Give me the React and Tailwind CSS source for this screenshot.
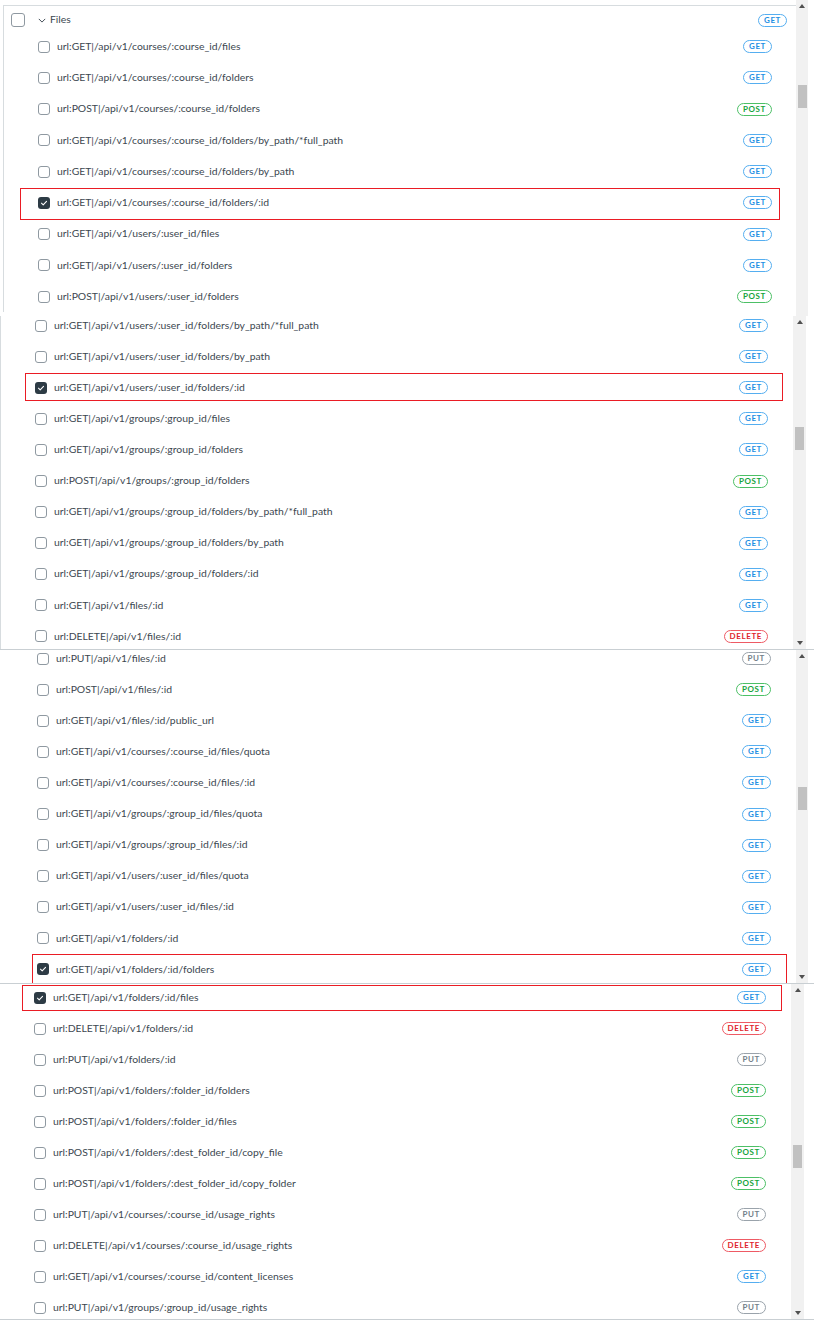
import React from "react";

const BADGE = {
  GET: "text-[#1f8fe3] border-[#55aef0]",
  POST: "text-[#16a33c] border-[#4cc066]",
  DELETE: "text-[#e01e2e] border-[#ee5a64]",
  PUT: "text-[#737f89] border-[#9aa3ab]",
};

const PANELS = [
  {
    wrap: "h-[316px]",
    list: "mt-[5px] ml-[3px] border-t border-l border-[#d7dcdf]",
    rows: "pl-[34px] pr-[24px]",
    rowH: "h-[31.25px]",
    header: true,
    bar: "w-[12px] mr-[6px]",
    thumb: "mt-[73px]",
    down: false,
    box: "-left-[18px] -right-[8px] top-[1px] -bottom-[1px]",
    items: [
      ["GET", "/api/v1/courses/:course_id/files"],
      ["GET", "/api/v1/courses/:course_id/folders"],
      ["POST", "/api/v1/courses/:course_id/folders"],
      ["GET", "/api/v1/courses/:course_id/folders/by_path/*full_path"],
      ["GET", "/api/v1/courses/:course_id/folders/by_path"],
      ["GET", "/api/v1/courses/:course_id/folders/:id", true],
      ["GET", "/api/v1/users/:user_id/files"],
      ["GET", "/api/v1/users/:user_id/folders"],
      ["POST", "/api/v1/users/:user_id/folders"],
    ],
  },
  {
    wrap: "h-[333px]",
    list: "ml-0 border-l border-[#d7dcdf] -mt-[6px]",
    rows: "pl-[34px] pr-[25px]",
    rowH: "h-[31.1px]",
    bar: "w-[13px] mr-[8px]",
    thumb: "mt-[99px]",
    down: true,
    box: "-left-[10px] -right-[15px] top-[0.5px] bottom-[2.5px]",
    items: [
      ["GET", "/api/v1/users/:user_id/folders/by_path/*full_path"],
      ["GET", "/api/v1/users/:user_id/folders/by_path"],
      ["GET", "/api/v1/users/:user_id/folders/:id", true],
      ["GET", "/api/v1/groups/:group_id/files"],
      ["GET", "/api/v1/groups/:group_id/folders"],
      ["POST", "/api/v1/groups/:group_id/folders"],
      ["GET", "/api/v1/groups/:group_id/folders/by_path/*full_path"],
      ["GET", "/api/v1/groups/:group_id/folders/by_path"],
      ["GET", "/api/v1/groups/:group_id/folders/:id"],
      ["GET", "/api/v1/files/:id"],
      ["DELETE", "/api/v1/files/:id"],
    ],
  },
  {
    wrap: "h-[334px] border-t border-[#c9cfd3]",
    list: "-mt-[7px]",
    rows: "pl-[37px] pr-[25px]",
    rowH: "h-[31.1px]",
    bar: "w-[12px] mr-[6px]",
    thumb: "mt-[125px]",
    down: true,
    box: "-left-[5px] -right-[16px] top-[0.5px] -bottom-[2px]",
    items: [
      ["PUT", "/api/v1/files/:id"],
      ["POST", "/api/v1/files/:id"],
      ["GET", "/api/v1/files/:id/public_url"],
      ["GET", "/api/v1/courses/:course_id/files/quota"],
      ["GET", "/api/v1/courses/:course_id/files/:id"],
      ["GET", "/api/v1/groups/:group_id/files/quota"],
      ["GET", "/api/v1/groups/:group_id/files/:id"],
      ["GET", "/api/v1/users/:user_id/files/quota"],
      ["GET", "/api/v1/users/:user_id/files/:id"],
      ["GET", "/api/v1/folders/:id"],
      ["GET", "/api/v1/folders/:id/folders", true],
    ],
  },
  {
    wrap: "h-[337px] border-t border-b border-[#c9cfd3]",
    list: "-mt-[2px]",
    rows: "pl-[34px] pr-[25px]",
    rowH: "h-[31px]",
    bar: "w-[13px] mr-[10px]",
    thumb: "mt-[149px]",
    down: true,
    box: "-left-[12px] -right-[16px] top-[2.5px] bottom-[2.5px]",
    items: [
      ["GET", "/api/v1/folders/:id/files", true],
      ["DELETE", "/api/v1/folders/:id"],
      ["PUT", "/api/v1/folders/:id"],
      ["POST", "/api/v1/folders/:folder_id/folders"],
      ["POST", "/api/v1/folders/:folder_id/files"],
      ["POST", "/api/v1/folders/:dest_folder_id/copy_file"],
      ["POST", "/api/v1/folders/:dest_folder_id/copy_folder"],
      ["PUT", "/api/v1/courses/:course_id/usage_rights"],
      ["DELETE", "/api/v1/courses/:course_id/usage_rights"],
      ["GET", "/api/v1/courses/:course_id/content_licenses"],
      ["PUT", "/api/v1/groups/:group_id/usage_rights"],
    ],
  },
];

function Checkbox({ checked, big }) {
  const size = big ? "h-[14px] w-[14px]" : "h-[12px] w-[12px]";
  if (checked) {
    return (
      <span className={`flex shrink-0 items-center justify-center rounded-[3px] bg-[#2d3b45] ${size}`}>
        <svg viewBox="0 0 12 12" className="h-[8px] w-[8px]">
          <path d="M2.2 6.3 L4.8 8.8 L9.8 3.4" fill="none" stroke="white" strokeWidth="1.6" strokeLinecap="round" strokeLinejoin="round" />
        </svg>
      </span>
    );
  }
  return <span className={`shrink-0 rounded-[3px] border border-[#8f99a1] bg-white ${size}`} />;
}

function Badge({ method }) {
  return (
    <span
      className={`ml-auto shrink-0 rounded-full border bg-white px-[5px] text-[8px] font-bold leading-[11px] tracking-[0.6px] ${BADGE[method]}`}
    >
      {method}
    </span>
  );
}

function Row({ item, rowH, box }) {
  const [method, path, hl] = item;
  return (
    <div className={`relative flex items-center ${rowH}`}>
      {hl && <div className={`pointer-events-none absolute border-[1.5px] border-[#ea1c24] ${box}`} />}
      <Checkbox checked={hl} />
      <span className="ml-[7px] whitespace-nowrap text-[10.4px] text-[#3c4750]">
        url:{method}|{path}
      </span>
      <Badge method={method} />
    </div>
  );
}

function Arrow({ up }) {
  return (
    <div className="flex h-[12px] shrink-0 items-center justify-center">
      <svg viewBox="0 0 6 4" className="h-[4px] w-[6px]">
        <path d={up ? "M0 4 L3 0 L6 4 Z" : "M0 0 L3 4 L6 0 Z"} fill="#505050" />
      </svg>
    </div>
  );
}

function Scrollbar({ p }) {
  return (
    <div className={`flex shrink-0 flex-col bg-[#f1f1f1] ${p.bar}`}>
      <Arrow up />
      <div className={`mx-auto h-[23px] w-[9px] bg-[#c1c1c1] ${p.thumb}`} />
      <div className="flex-1" />
      {p.down && <Arrow />}
    </div>
  );
}

function Panel({ p }) {
  return (
    <div className={`flex overflow-hidden bg-white ${p.wrap}`}>
      <div className="min-w-0 flex-1 overflow-hidden">
        <div className={p.list}>
          {p.header && (
            <div className="flex h-[25px] items-center pl-[7px] pr-[9px] pt-[3px]">
              <Checkbox big />
              <svg viewBox="0 0 10 6" className="ml-[13px] h-[5px] w-[8px]">
                <path d="M1 1 L5 5 L9 1" fill="none" stroke="#3c4750" strokeWidth="1.2" />
              </svg>
              <span className="ml-[4px] text-[10.4px] text-[#3c4750]">Files</span>
              <Badge method="GET" />
            </div>
          )}
          <div className={p.rows}>
            {p.items.map((it, i) => (
              <Row key={i} item={it} rowH={p.rowH} box={p.box} />
            ))}
          </div>
        </div>
      </div>
      <Scrollbar p={p} />
    </div>
  );
}

export default function App() {
  return (
    <div className="w-[814px] bg-white font-['Lato','Liberation_Sans',sans-serif]">
      {PANELS.map((p, i) => (
        <Panel key={i} p={p} />
      ))}
    </div>
  );
}
